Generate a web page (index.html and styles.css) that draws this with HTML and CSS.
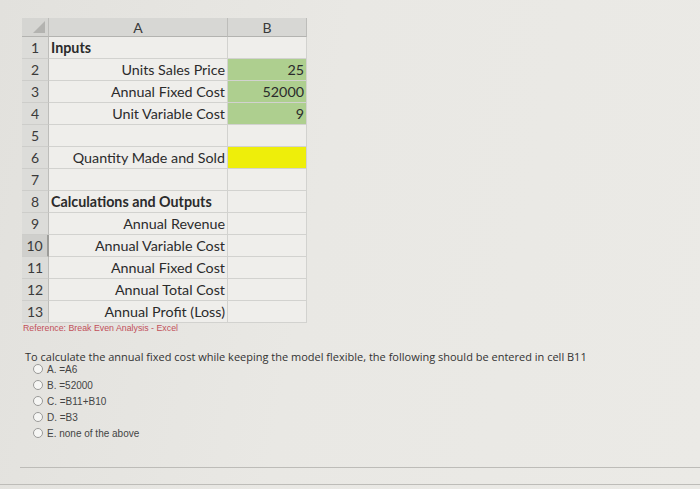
FILE: index.html
```html
<!DOCTYPE html>
<html>
<head>
<meta charset="utf-8">
<link rel="stylesheet" href="styles.css">
</head>
<body>
<div class="page">
  <div class="sheet">
    <div class="corner"><span class="tri"></span></div>
    <div class="colhead">A</div>
    <div class="colhead">B</div>

    <div class="rn">1</div><div class="c a bold left">Inputs</div><div class="c b"></div>
    <div class="rn">2</div><div class="c a">Units Sales Price</div><div class="c b green">25</div>
    <div class="rn">3</div><div class="c a">Annual Fixed Cost</div><div class="c b green">52000</div>
    <div class="rn">4</div><div class="c a">Unit Variable Cost</div><div class="c b green">9</div>
    <div class="rn">5</div><div class="c a"></div><div class="c b"></div>
    <div class="rn">6</div><div class="c a">Quantity Made and Sold</div><div class="c b yellow"></div>
    <div class="rn">7</div><div class="c a"></div><div class="c b"></div>
    <div class="rn">8</div><div class="c a bold left">Calculations and Outputs</div><div class="c b"></div>
    <div class="rn">9</div><div class="c a">Annual Revenue</div><div class="c b"></div>
    <div class="rn sel">10</div><div class="c a">Annual Variable Cost</div><div class="c b"></div>
    <div class="rn">11</div><div class="c a">Annual Fixed Cost</div><div class="c b"></div>
    <div class="rn">12</div><div class="c a">Annual Total Cost</div><div class="c b"></div>
    <div class="rn">13</div><div class="c a">Annual Profit (Loss)</div><div class="c b"></div>
  </div>
  <div class="ref">Reference: Break Even Analysis - Excel</div>

  <div class="question">To calculate the annual fixed cost while keeping the model flexible, the following should be entered in cell B11</div>
  <ul class="options">
    <li><span class="radio"></span>A. =A6</li>
    <li><span class="radio"></span>B. =52000</li>
    <li><span class="radio"></span>C. =B11+B10</li>
    <li><span class="radio"></span>D. =B3</li>
    <li><span class="radio"></span>E. none of the above</li>
  </ul>
  <div class="rule rule1"></div>
  <div class="rule rule2"></div>
</div>
</body>
</html>
```
FILE: styles.css
```css
html, body {
  margin: 0;
  padding: 0;
}
body {
  width: 700px;
  height: 489px;
  overflow: hidden;
  background: linear-gradient(100deg, #e2e1dd 0%, #e9e8e4 45%, #ebeae6 100%);
  font-family: "Lato", "Liberation Sans", sans-serif;
}
.page {
  display: flex;
  flex-direction: column;
  padding-top: 18px;
}
.sheet {
  margin-left: 22px;
  display: grid;
  grid-template-columns: 27px 179px 79px;
  grid-template-rows: 19px repeat(13, 22px);
  width: 285px;
  background: #efeeeb;
  color: #2b2b2b;
}
.corner {
  background: #d5d5d2;
  border-right: 1px solid #bdbdba;
  border-bottom: 1px solid #b3b3b0;
  position: relative;
}
.tri {
  position: absolute;
  right: 3px;
  bottom: 3px;
  width: 0;
  height: 0;
  border-left: 12px solid transparent;
  border-bottom: 12px solid #b3b3b0;
}
.colhead {
  background: #d7d7d4;
  border-right: 1px solid #bdbdba;
  border-bottom: 1px solid #b3b3b0;
  display: flex;
  align-items: center;
  justify-content: center;
  font-size: 14px;
  color: #3a3a3a;
}
.rn {
  background: #dcdcd9;
  border-right: 1px solid #bdbdba;
  border-bottom: 1px solid #cdcdca;
  display: flex;
  align-items: center;
  justify-content: center;
  font-size: 14px;
  color: #3a3a3a;
}
.rn.sel {
  background: #cfcfcc;
  border-right: 2px solid #9c9c99;
}
.c {
  border-right: 1px solid #d2d2cf;
  border-bottom: 1px solid #d2d2cf;
  display: flex;
  align-items: center;
  justify-content: flex-end;
  padding: 0 2px;
  font-size: 14.3px;
  white-space: nowrap;
}
.c.left {
  justify-content: flex-start;
}
.bold {
  font-weight: 700;
}
.green {
  background: #aecf8f;
}
.yellow {
  background: #eeee0a;
}
.ref {
  margin-left: 23px;
  font-family: "Liberation Sans", Arial, sans-serif;
  font-size: 8.8px;
  color: #c2505a;
  line-height: 10px;
}
.question {
  margin-left: 25px;
  margin-top: 18px;
  font-family: "Open Sans", sans-serif;
  font-size: 11px;
  color: #333;
  line-height: 12px;
  white-space: nowrap;
}
.options {
  list-style: none;
  margin: -2px 0 0 33px;
  padding: 0;
}
.options li {
  display: flex;
  align-items: center;
  height: 16px;
  font-family: "Liberation Sans", Arial, sans-serif;
  font-size: 10px;
  color: #444;
}
.radio {
  width: 8px;
  height: 8px;
  border: 1px solid #9a9a98;
  border-radius: 50%;
  background: #f6f6f4;
  margin-right: 4px;
}
.rule {
  height: 1px;
  background: #bdbcb8;
}
.rule1 {
  margin-top: 26px;
  margin-left: 20px;
}
.rule2 {
  margin-top: 16px;
}
```
